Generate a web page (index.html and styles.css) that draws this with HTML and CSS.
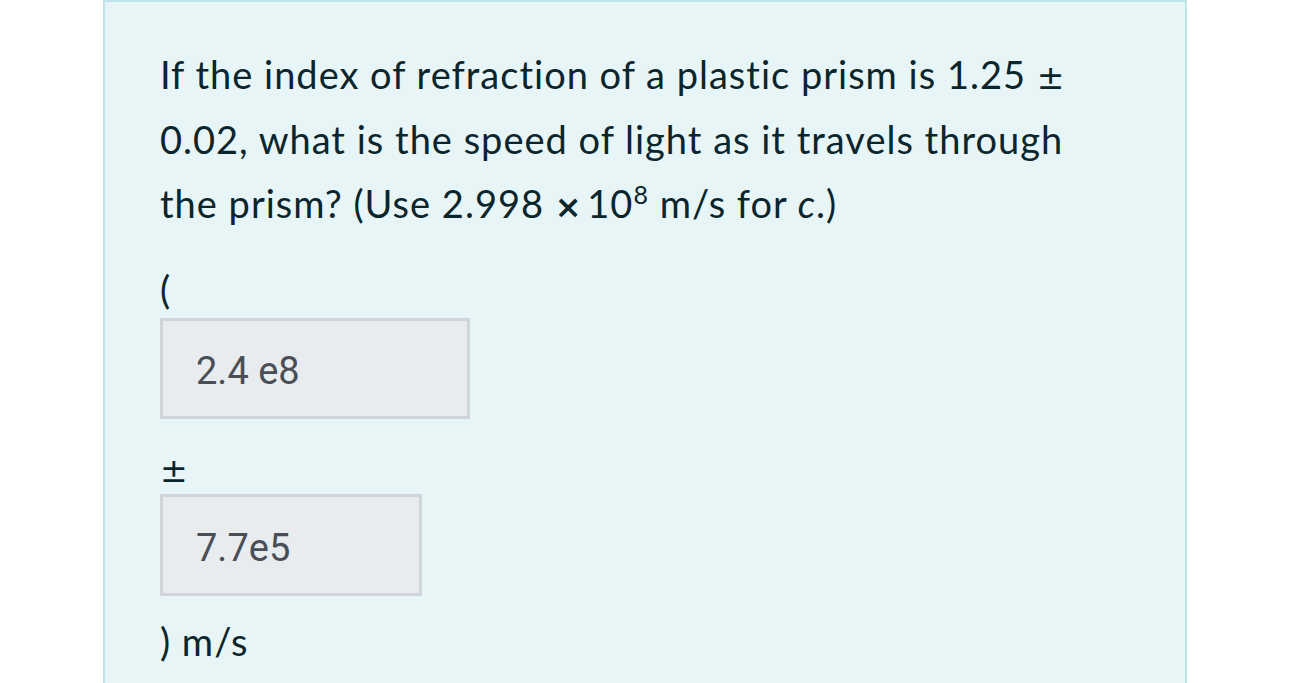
FILE: index.html
```html
<!DOCTYPE html>
<html><head>
<meta charset="UTF-8">
<link rel="stylesheet" href="styles.css">
<title>Question</title>
</head>
<body>
<div class="panel">
  <p class="question">If the index of refraction of a plastic prism is 1.25 <span class="sym">&plusmn;</span> 0.02, what is the speed of light as it travels through the prism? (Use 2.998 <b class="times">&times;</b>&thinsp;10<sup>8</sup> m/s for <i>c</i>.)</p>
  <div class="answer">
    <div class="paren">(</div>
    <div class="field wide">2.4 e8</div>
    <div class="pm"><span class="sym">&plusmn;</span></div>
    <div class="field narrow">7.7e5</div>
    <div class="unit">) m/s</div>
  </div>
</div>
</body></html>
```
FILE: styles.css
```css
html, body {
  margin: 0;
  background: #fff;
}
body {
  font-family: Lato, "Open Sans", sans-serif;
  color: #0b252d;
}
.panel {
  margin-left: 103px;
  width: 1084px;
  min-height: 700px;
  background: #e7f5f7;
  border: 2px solid #bfe3ea;
  border-bottom: 0;
  box-sizing: border-box;
  padding: 40px 55px 0;
}
.question {
  margin: 0;
  width: 950px;
  font-size: 38px;
  letter-spacing: 1px;
  line-height: 64.5px;
}
.sym {
  font-family: "DejaVu Sans", sans-serif;
  font-size: 33px;
  letter-spacing: 0;
  line-height: 0;
}
.times {
  font-family: "DejaVu Sans", sans-serif;
  font-size: 32px;
  font-weight: bold;
  letter-spacing: 0;
  line-height: 0;
}
sup {
  font-size: 25px;
  line-height: 0;
}
.answer {
  padding-top: 33px;
  font-size: 38px;
  letter-spacing: 1px;
}
.paren, .pm, .unit {
  line-height: 40px;
}
.field {
  box-sizing: border-box;
  height: 101px;
  background: #e8ecef;
  border: 3px solid #cfd5da;
  padding: 6px 0 0 33px;
  display: flex;
  align-items: center;
  font-family: Roboto, "Liberation Sans", sans-serif;
  font-size: 38px;
  letter-spacing: 0;
  color: #4a4f57;
}
.wide {
  width: 310px;
  margin: 9px 0 28px;
}
.narrow {
  width: 262px;
  height: 102px;
  margin: 7px 0 25px;
}
```
